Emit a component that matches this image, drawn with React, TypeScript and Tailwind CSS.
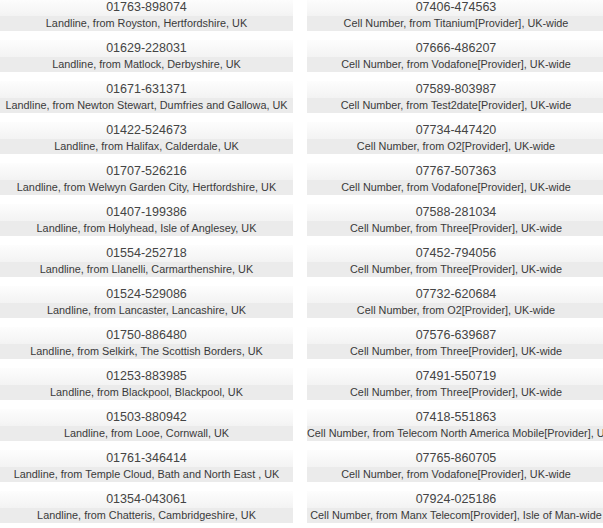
const left = [
  ["01763-898074", "Landline, from Royston, Hertfordshire, UK"],
  ["01629-228031", "Landline, from Matlock, Derbyshire, UK"],
  ["01671-631371", "Landline, from Newton Stewart, Dumfries and Gallowa, UK"],
  ["01422-524673", "Landline, from Halifax, Calderdale, UK"],
  ["01707-526216", "Landline, from Welwyn Garden City, Hertfordshire, UK"],
  ["01407-199386", "Landline, from Holyhead, Isle of Anglesey, UK"],
  ["01554-252718", "Landline, from Llanelli, Carmarthenshire, UK"],
  ["01524-529086", "Landline, from Lancaster, Lancashire, UK"],
  ["01750-886480", "Landline, from Selkirk, The Scottish Borders, UK"],
  ["01253-883985", "Landline, from Blackpool, Blackpool, UK"],
  ["01503-880942", "Landline, from Looe, Cornwall, UK"],
  ["01761-346414", "Landline, from Temple Cloud, Bath and North East , UK"],
  ["01354-043061", "Landline, from Chatteris, Cambridgeshire, UK"],
];

const right = [
  ["07406-474563", "Cell Number, from Titanium[Provider], UK-wide"],
  ["07666-486207", "Cell Number, from Vodafone[Provider], UK-wide"],
  ["07589-803987", "Cell Number, from Test2date[Provider], UK-wide"],
  ["07734-447420", "Cell Number, from O2[Provider], UK-wide"],
  ["07767-507363", "Cell Number, from Vodafone[Provider], UK-wide"],
  ["07588-281034", "Cell Number, from Three[Provider], UK-wide"],
  ["07452-794056", "Cell Number, from Three[Provider], UK-wide"],
  ["07732-620684", "Cell Number, from O2[Provider], UK-wide"],
  ["07576-639687", "Cell Number, from Three[Provider], UK-wide"],
  ["07491-550719", "Cell Number, from Three[Provider], UK-wide"],
  ["07418-551863", "Cell Number, from Telecom North America Mobile[Provider], UK-wide"],
  ["07765-860705", "Cell Number, from Vodafone[Provider], UK-wide"],
  ["07924-025186", "Cell Number, from Manx Telecom[Provider], Isle of Man-wide"],
];

function NumberCard({ num, desc }: { num: string; desc: string }) {
  return (
    <div className="mb-[9px]">
      <div className="h-[17px] bg-gradient-to-b from-[#fdfdfd] to-[#f3f3f3] text-center text-[12.5px] leading-[17px] text-[#444] whitespace-nowrap">
        {num}
      </div>
      <div className="h-[15px] bg-[#ebebeb] text-center text-[10.85px] leading-[15px] text-[#3a3a3a] whitespace-nowrap">
        {desc}
      </div>
    </div>
  );
}

export default function App() {
  return (
    <div
      className="w-[603px] h-[528px] overflow-hidden bg-white"
      style={{ fontFamily: '"Liberation Sans", Arial, sans-serif' }}
    >
      <div className="grid grid-cols-[293px_298px] gap-x-[14px] -mt-px">
        <div>
          {left.map(([n, d]) => (
            <NumberCard key={n} num={n} desc={d} />
          ))}
        </div>
        <div>
          {right.map(([n, d]) => (
            <NumberCard key={n} num={n} desc={d} />
          ))}
        </div>
      </div>
    </div>
  );
}
